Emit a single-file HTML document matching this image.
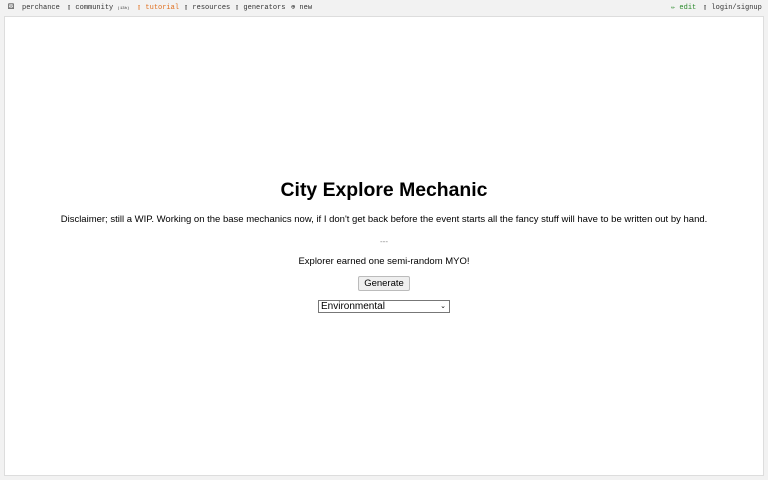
<!DOCTYPE html>
<html><head><meta charset="utf-8"><style>
body{margin:0;width:768px;height:480px;background:#f2f2f2;font-family:"Liberation Sans",sans-serif;position:relative;overflow:hidden}
.bar{position:absolute;top:0;left:0;right:0;height:16px;font-family:"Liberation Mono",monospace;font-size:7px;color:#333;line-height:17px}
.bar span{position:absolute;top:0;white-space:nowrap}
.frame{position:absolute;left:4px;top:16px;width:758px;height:458px;background:#fff;border:1px solid #ddd}
.c{position:absolute;left:0;right:0;text-align:center;color:#000}
</style></head><body>
<div class="bar">
<span style="left:8px;font-size:10px;line-height:15px">⚄</span>
<span style="left:22px">perchance</span>
<span style="left:67px">▯ community <small style="font-size:4px">(13h)</small></span>
<span style="left:137px;color:#e07020">▯ tutorial</span>
<span style="left:184px">▯ resources</span>
<span style="left:235px">▯ generators</span>
<span style="left:291px">⊕ new</span>
<span style="left:671px;color:#2a8a2a">✏ edit</span>
<span style="left:703px">▯ login/signup</span>
</div>
<div class="frame">
<div class="c" style="top:162px;font-size:19.4px;font-weight:bold">City Explore Mechanic</div>
<div class="c" style="top:197px;font-size:9.5px">Disclaimer; still a WIP. Working on the base mechanics now, if I don't get back before the event starts all the fancy stuff will have to be written out by hand.</div>
<div class="c" style="top:220px;font-size:8px;color:#888">---</div>
<div class="c" style="top:239px;font-size:9.5px">Explorer earned one semi-random MYO!</div>
<div class="c" style="top:256px"><span style="display:inline-block;font-size:9.5px;padding:1px 5px;background:#efefef;border:1px solid #bbb;border-radius:2px">Generate</span></div>
<div class="c" style="top:279px"><span style="display:inline-block;width:128px;height:11px;border:1px solid #777;text-align:left;font-size:10px;line-height:11px;padding-left:2px;position:relative">Environmental<span style="position:absolute;right:3px;font-size:7px">⌄</span></span></div>
</div>
</body></html>
